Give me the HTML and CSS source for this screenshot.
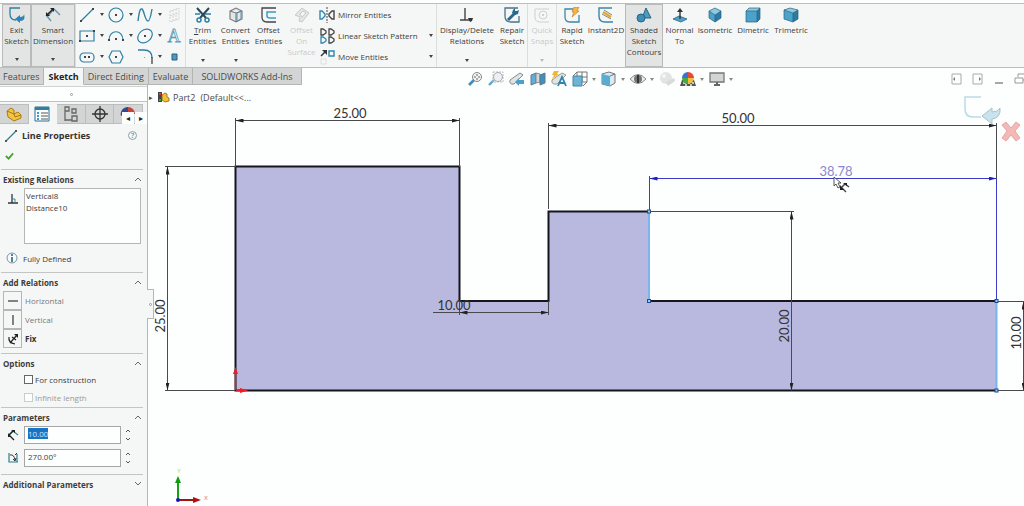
FILE: index.html
```
<!DOCTYPE html>
<html lang="en">
<head>
    <meta charset="UTF-8">
    <meta name="viewport" content="width=device-width, initial-scale=1.0">
    <title>Part2 - Sketch</title>
    <link rel="stylesheet" href="styles.css">
</head>
<body>
    <header class="ribbon">
        <div class="group">
            <button type="button" class="tool pressed w-exit">
                <svg class="icon" viewBox="0 0 16 16"><path d="M11 1H1v6q0 6 6 6" fill="none" stroke="#2f7fa3" stroke-width="1.3"/><path d="M6 12l5-4v2q4 0 4-3 2 7-4 7v2z" fill="#2f86b4"/></svg>
                <span>Exit<br>Sketch</span><i class="caret"></i>
            </button>
            <button type="button" class="tool pressed w-smart">
                <svg class="icon" viewBox="0 0 16 16"><path d="M3 9l6-7 6 6M1 8l5 6" fill="none" stroke="#5b93ab" stroke-width="1.3"/><path d="M2 8l6-6" stroke="#222" stroke-width="1.5"/><path d="M5 1h4v4zM1 5v4h4z" fill="#222"/></svg>
                <span>Smart<br>Dimension</span><i class="caret"></i>
            </button>
        </div>

        <div class="group sketch-tools">
            <button type="button" aria-label="Line"><svg class="icon" viewBox="0 0 16 16"><path d="M2 14L14 2" stroke="#2f7fa3" stroke-width="1.3"/><path d="M1 13h2v2H1zM13 1h2v2h-2z" fill="#444"/></svg><i class="caret"></i></button>
            <button type="button" aria-label="Circle"><svg class="icon" viewBox="0 0 16 16"><circle cx="8" cy="8" r="7" fill="none" stroke="#2f7fa3" stroke-width="1.2"/><path d="M7 7h2v2H7z" fill="#444"/></svg><i class="caret"></i></button>
            <button type="button" aria-label="Spline"><svg class="icon" viewBox="0 0 16 16"><path d="M1 14C2 6 3 1 5 2s3 12 6 12c2 0 3-6 4-12" fill="none" stroke="#2f7fa3" stroke-width="1.4"/></svg><i class="caret"></i></button>
            <button type="button" aria-label="Plane" disabled><svg class="icon" viewBox="0 0 16 16"><path d="M4 4l9-3v11l-9 3zM7 3v11M10 2v11M4 9l9-3" fill="none" stroke="#d2d4d4" stroke-dasharray="2 1"/></svg></button>
            <button type="button" aria-label="Rectangle"><svg class="icon" viewBox="0 0 16 16"><path d="M1 3h14v10H1z" fill="none" stroke="#2f7fa3" stroke-width="1.2"/><path d="M7 7h2v2H7zM0 12h2v2H0zM14 2h2v2h-2z" fill="#444"/></svg><i class="caret"></i></button>
            <button type="button" aria-label="Arc"><svg class="icon" viewBox="0 0 16 16"><path d="M1 12C1 1 15 1 15 12" fill="none" stroke="#2f7fa3" stroke-width="1.2"/><path d="M7 10h2v2H7zM0 11h2v2H0zM14 11h2v2h-2z" fill="#444"/></svg><i class="caret"></i></button>
            <button type="button" aria-label="Ellipse"><svg class="icon" viewBox="0 0 16 16"><ellipse cx="8" cy="8" rx="8" ry="6" transform="rotate(-40 8 8)" fill="none" stroke="#2f7fa3" stroke-width="1.2"/><path d="M7 7h2v2H7z" fill="#444"/></svg><i class="caret"></i></button>
            <button type="button" aria-label="Text"><svg class="icon-text" viewBox="0 0 16 20"><text x="8" y="16" text-anchor="middle" class="glyph-a">A</text></svg></button>
            <button type="button" aria-label="Slot"><svg class="icon" viewBox="0 0 16 16"><rect x="1" y="4" width="14" height="9" rx="4" fill="none" stroke="#2f7fa3" stroke-width="1.2"/><path d="M5 7h2v2H5zM9 7h2v2H9z" fill="#444"/></svg><i class="caret"></i></button>
            <button type="button" aria-label="Polygon"><svg class="icon" viewBox="0 0 16 16"><path d="M4 2h8l3 6-3 6H4L1 8z" fill="none" stroke="#2f7fa3" stroke-width="1.2"/><path d="M7 7h2v2H7z" fill="#444"/></svg></button>
            <button type="button" aria-label="Fillet"><svg class="icon" viewBox="0 0 16 16"><path d="M1 1h6q8 0 8 8" fill="none" stroke="#2f7fa3" stroke-width="1.3"/><path d="M15 8v7" stroke="#444" stroke-width="1.3"/><path d="M7 8h1v1H7z" fill="#999"/></svg><i class="caret"></i></button>
            <button type="button" aria-label="Point"><svg class="icon" viewBox="0 0 16 16"><path d="M6 5h5v6H6z" fill="#4a9cc4" stroke="#2a5f7b"/></svg></button>
        </div>

        <div class="group">
            <button type="button" class="tool w-33">
                <svg class="icon" viewBox="0 0 16 16"><path d="M0 7h5M9 7h7" stroke="#2f7fa3" stroke-width="1.5"/><path d="M2 1l9 10M14 1L5 11" stroke="#28495a" stroke-width="2"/><circle cx="4" cy="13" r="2" fill="none" stroke="#2f7fa3" stroke-width="1.5"/><circle cx="12" cy="13" r="2" fill="none" stroke="#2f7fa3" stroke-width="1.5"/></svg>
                <span><u>T</u>rim<br>Entities</span><i class="caret"></i>
            </button>
            <button type="button" class="tool w-33">
                <svg class="icon" viewBox="0 0 16 16"><path d="M2 4l6-3 6 3v8l-6 3-6-3zM2 4l6 2 6-2M8 6v9" fill="#e5e7e7" stroke="#777" stroke-width="1.1"/><path d="M9 6l4-2v8l-4 2z" fill="none" stroke="#5793ad" stroke-width="1"/></svg>
                <span>Convert<br>Entities</span><i class="caret"></i>
            </button>
            <button type="button" class="tool w-33">
                <svg class="icon" viewBox="0 0 16 16"><path d="M15 1H1v9q0 5 5 5h9" fill="none" stroke="#444" stroke-width="1.3"/><path d="M15 5H6v4q0 2 3 2h6" fill="none" stroke="#3a9cc9" stroke-width="1.5"/></svg>
                <span>Offset<br>Entities</span>
            </button>
            <button type="button" class="tool w-33" disabled>
                <svg class="icon" viewBox="0 0 16 16"><path d="M1 8l7-7 7 5-7 9-3-1 1-4z" fill="#e3e5e5" stroke="#c8caca"/><path d="M6 7l3-3 3 2-4 4z" fill="#f5f6f6" stroke="#c8caca"/></svg>
                <span>Offset<br>On<br>Surface</span>
            </button>
        </div>

        <div class="group entity-list">
            <button type="button"><svg class="icon" viewBox="0 0 16 16"><path d="M8 0v16" stroke="#444" stroke-dasharray="2 1"/><path d="M1 4v8h2l3-3V7L3 4z" fill="none" stroke="#2f86b4" stroke-width="1.4"/><path d="M15 4v8h-2l-3-3V7l3-3z" fill="none" stroke="#444" stroke-width="1.4"/></svg><span>Mirror Entities</span></button>
            <button type="button"><svg class="icon" viewBox="0 0 16 16"><path d="M2 1v6h2l3-2V3L4 1zM10 1v6h2l3-2V3l-3-2zM10 9v6h2l3-2v-2l-3-2z" fill="none" stroke="#444" stroke-width="1.3"/><path d="M2 9v6h2l3-2v-2L4 9z" fill="none" stroke="#2f86b4" stroke-width="1.3"/></svg><span>Linear Sketch Pattern</span><i class="caret"></i></button>
            <button type="button"><svg class="icon" viewBox="0 0 16 16"><path d="M2 7l4-4" stroke="#333" stroke-width="1.5"/><path d="M3 1h5v5z" fill="#333"/><path d="M10 2h5v5h-5z" fill="none" stroke="#2f86b4" stroke-width="1.4"/><path d="M2 10h5v5H2z" fill="none" stroke="#ddd"/></svg><span>Move Entities</span><i class="caret"></i></button>
        </div>

        <div class="group">
            <button type="button" class="tool w-60">
                <svg class="icon" viewBox="0 0 16 16"><path d="M6 1v12M1 13h10" stroke="#444" stroke-width="1.4"/><path d="M9 11h5l-1 3-2 1z" fill="#333"/></svg>
                <span>Display/Delete<br>Relations</span><i class="caret"></i>
            </button>
            <button type="button" class="tool w-30">
                <svg class="icon" viewBox="0 0 16 16"><path d="M14 1H1v8q0 6 6 6h8V9" fill="none" stroke="#4b7488" stroke-width="1.3"/><path d="M4 13l7-7" stroke="#276b93" stroke-width="3"/><path d="M9 3l2-2v3h2l2-1-1 4-3 1-3-2z" fill="#276b93"/></svg>
                <span>Repair<br>Sketch</span>
            </button>
        </div>
        <div class="group">
            <button type="button" class="tool w-28" disabled>
                <svg class="icon" viewBox="0 0 16 16"><path d="M15 2H1v8q0 5 5 5h9" fill="none" stroke="#cfd1d1"/><circle cx="9" cy="8" r="4" fill="none" stroke="#cfd1d1"/><path d="M8 7h2v2H8z" fill="#cfd1d1"/></svg>
                <span>Quick<br>Snaps</span><i class="caret"></i>
            </button>
        </div>
        <div class="group last">
            <button type="button" class="tool w-30">
                <svg class="icon" viewBox="0 0 16 16"><path d="M9 2H1v8q0 5 5 5h9V8" fill="none" stroke="#3c87a8" stroke-width="1.3"/><path d="M10 0h5l-2 4h2l-7 6 2-5H8z" fill="#f6b73c" stroke="#b9772a" stroke-width=".6"/></svg>
                <span>Rapid<br>Sketch</span>
            </button>
            <button type="button" class="tool w-38">
                <svg class="icon" viewBox="0 0 16 16"><path d="M14 1H1v8q0 6 6 6h8" fill="none" stroke="#3c87a8" stroke-width="1.4"/><path d="M5 5l8 5" stroke="#e0a92f" stroke-width="2.4"/><path d="M4 7l9 5M6 3l8 5" stroke="#555" stroke-width=".7"/></svg>
                <span>Instant2D</span>
            </button>
            <button type="button" class="tool pressed w-38">
                <svg class="icon" viewBox="0 0 16 16"><path d="M10 1l5 10H6z" fill="#4a9cc4" stroke="#2a6380"/><circle cx="5" cy="11" r="4" fill="#3d8fb9" stroke="#2a6380"/></svg>
                <span>Shaded<br>Sketch<br>Contours</span>
            </button>
            <button type="button" class="tool w-33">
                <svg class="icon" viewBox="0 0 16 16"><path d="M1 12l6-3 8 3-6 3z" fill="#4ba3cc" stroke="#2a6380" stroke-width=".8"/><path d="M8 12V3" stroke="#333" stroke-width="1.4"/><path d="M5 5l3-4 3 4z" fill="#333"/></svg>
                <span>Normal<br>To</span>
            </button>
            <button type="button" class="tool w-38">
                <svg class="icon" viewBox="0 0 16 16"><path d="M8 1l6 3-6 4-6-4z" fill="#8ccbe4"/><path d="M2 4l6 4v7l-6-4z" fill="#4ba3cc"/><path d="M14 4L8 8v7l6-4z" fill="#2c7ba3"/><path d="M8 1l6 3v7l-6 4-6-4V4zM2 4l6 4 6-4M8 8v7" fill="none" stroke="#2a5f7b" stroke-width=".7"/></svg>
                <span>Isometric</span>
            </button>
            <button type="button" class="tool w-38">
                <svg class="icon" viewBox="0 0 16 16"><path d="M1 4l3-3h11l-3 3z" fill="#8ccbe4"/><path d="M1 4h11v11H1z" fill="#4ba3cc"/><path d="M15 1v11l-3 3V4z" fill="#2c7ba3"/><path d="M1 4l3-3h11v11l-3 3H1zM1 4h11v11M12 4l3-3" fill="none" stroke="#2a5f7b" stroke-width=".7"/></svg>
                <span>Dimetric</span>
            </button>
            <button type="button" class="tool w-38">
                <svg class="icon" viewBox="0 0 16 16"><path d="M1 3l6-2 8 2-5 3z" fill="#8ccbe4"/><path d="M1 3l9 3v9l-9-3z" fill="#4ba3cc"/><path d="M15 3v9l-5 3V6z" fill="#2c7ba3"/><path d="M1 3l6-2 8 2v9l-5 3-9-3zM1 3l9 3v9M10 6l5-3" fill="none" stroke="#2a5f7b" stroke-width=".7"/></svg>
                <span>Trimetric</span>
            </button>
        </div>
    </header>

    <nav class="tabs">
        <a href="#">Features</a>
        <a href="#" class="active">Sketch</a>
        <a href="#">Direct Editing</a>
        <a href="#">Evaluate</a>
        <a href="#" class="addins">SOLIDWORKS Add-Ins</a>
    </nav>

    <main class="workspace">
        <aside class="panel">
            <div class="grip"><i class="dot"></i></div>
            <div class="panel-tabs">
                <button type="button" aria-label="FeatureManager"><svg class="icon" viewBox="0 0 16 16"><path d="M1 5l4-3 3 2v4l4-2 3 3v3l-7 3-6-4z" fill="#f3c53c" stroke="#a9781b"/><path d="M8 8l1 3 6-2M1 5l7 3" fill="none" stroke="#a9781b"/></svg></button>
                <button type="button" aria-label="PropertyManager" class="active"><svg class="icon" viewBox="0 0 16 16"><path d="M1 1h14v14H1z" fill="#fff" stroke="#2a6f91"/><path d="M1 1h14v3H1z" fill="#2f7fa3"/><path d="M3 6h2v2H3zM3 9h2v2H3zM3 12h2v2H3z" fill="#3a9cc9"/><path d="M7 7h7M7 10h7M7 13h7" stroke="#555"/></svg></button>
                <button type="button" aria-label="ConfigurationManager"><svg class="icon" viewBox="0 0 16 16"><path d="M2 1h4v4H2zM9 3h4v4H9zM9 10h5v5H9zM2 5v9h7M2 5v10" fill="none" stroke="#666" stroke-width="1.3"/></svg></button>
                <button type="button" aria-label="DimXpertManager"><svg class="icon" viewBox="0 0 16 16"><circle cx="8" cy="8" r="5" fill="none" stroke="#333" stroke-width="1.3"/><path d="M8 0v16M0 8h16" stroke="#333" stroke-width="1.3"/></svg></button>
                <button type="button" aria-label="DisplayManager"><svg class="icon" viewBox="0 0 16 16"><path d="M8 8L1 10a7 7 0 0 1 7-9z" fill="#32498a"/><path d="M8 8V1a7 7 0 0 1 7 7z" fill="#c94336"/><path d="M8 8h7a7 7 0 0 1-14 2z" fill="#dfe7ef"/></svg></button>
                <div class="scroller"><button type="button" aria-label="Previous">◂</button><button type="button" aria-label="Next">▸</button></div>
            </div>
            <div class="title">
                <svg class="icon-sm" viewBox="0 0 12 12"><path d="M1 11L11 1" stroke="#3e7a88" stroke-width="1.2"/><path d="M0 10h2v2H0zM10 0h2v2h-2z" fill="#555"/></svg>
                <h1>Line Properties</h1>
                <button type="button" class="help" aria-label="Help">?</button>
            </div>
            <div class="confirm">
                <button type="button" aria-label="OK"><svg class="check" viewBox="0 0 10 8"><path d="M1 4l3 3 5-6" fill="none" stroke="#45a62c" stroke-width="2"/></svg></button>
            </div>

            <section>
                <h2>Existing Relations<svg class="chev" viewBox="0 0 6 4"><path d="M0 4l3-3 3 3"/></svg></h2>
                <div class="row">
                    <svg class="icon-sm row-icon" viewBox="0 0 12 12"><path d="M5 1v9M1 10h10" stroke="#333" stroke-width="1.3"/><path d="M5 6h3v4" fill="none" stroke="#3b8d95"/></svg>
                    <ul class="relations"><li>Vertical8</li><li>Distance10</li></ul>
                </div>
                <p class="status"><svg class="icon-sm" viewBox="0 0 12 12"><circle cx="6" cy="6" r="5" fill="#f5fafb" stroke="#81929b"/><path d="M6 2v2M6 5v5" stroke="#1a6c92" stroke-width="1.6"/></svg>Fully Defined</p>
            </section>

            <section>
                <h2>Add Relations<svg class="chev" viewBox="0 0 6 4"><path d="M0 4l3-3 3 3"/></svg></h2>
                <div class="add-relations">
                    <button type="button"><span class="box"><svg class="icon-sm" viewBox="0 0 12 12"><path d="M1 6h10" stroke="#333" stroke-width="1.2"/></svg></span>Horizontal</button>
                    <button type="button"><span class="box"><svg class="icon-sm" viewBox="0 0 12 12"><path d="M6 1v10" stroke="#333" stroke-width="1.2"/></svg></span>Vertical</button>
                    <button type="button" class="strong"><span class="box"><svg class="icon-sm" viewBox="0 0 12 12"><path d="M2 4q-1 6 6 7M3 10l7-8M5 4l4 3" fill="none" stroke="#222" stroke-width="1.2"/><path d="M7 1h4v4z" fill="#222"/></svg></span>Fix</button>
                </div>
            </section>

            <section>
                <h2>Options<svg class="chev" viewBox="0 0 6 4"><path d="M0 4l3-3 3 3"/></svg></h2>
                <div class="options">
                    <label><input type="checkbox">For construction</label>
                    <label class="off"><input type="checkbox" disabled>Infinite length</label>
                </div>
            </section>

            <section>
                <h2>Parameters<svg class="chev" viewBox="0 0 6 4"><path d="M0 4l3-3 3 3"/></svg></h2>
                <div class="params">
                    <label class="param" for="length">
                        <svg class="icon-sm" viewBox="0 0 12 12"><path d="M2 6l4-4 5 4" fill="none" stroke="#3f8f86" stroke-width="1.3"/><path d="M2 6l5 5M2 6l4-4" stroke="#222" stroke-width="1.4"/><path d="M1 4v4h3zM4 1h4v3z" fill="#222"/></svg>
                        <input type="text" id="length" value="10.00" aria-label="Length">
                        <span class="spin"><svg viewBox="0 0 5 3"><path d="M0 3l2-2 2 2"/></svg><svg viewBox="0 0 5 3"><path d="M0 0l2 2 2-2"/></svg></span>
                    </label>
                    <label class="param" for="angle">
                        <svg class="icon-sm" viewBox="0 0 12 12"><path d="M2 1v9h9M10 2v8" fill="none" stroke="#2c7f8c" stroke-width="1.2"/><path d="M3 3q4-1 5 5M6 7l2 2 1-3M8 3l2-2" fill="none" stroke="#333"/></svg>
                        <input type="text" id="angle" value="270.00°" aria-label="Angle">
                        <span class="spin"><svg viewBox="0 0 5 3"><path d="M0 3l2-2 2 2"/></svg><svg viewBox="0 0 5 3"><path d="M0 0l2 2 2-2"/></svg></span>
                    </label>
                </div>
            </section>

            <section>
                <h2>Additional Parameters<svg class="chev" viewBox="0 0 6 4"><path d="M0 0l3 3 3-3"/></svg></h2>
            </section>
            <div class="splitter"><i class="dot"></i></div>
        </aside>

        <div class="canvas">
            <svg class="drawing" width="100%" height="100%">
                <defs>
                    <marker id="arrow" viewBox="0 0 8 4" refX="8" refY="2" markerWidth="8" markerHeight="4" markerUnits="userSpaceOnUse" orient="auto-start-reverse"><path d="M0 0l8 2-8 2z" fill="#222"/></marker>
                    <marker id="arrowBlue" viewBox="0 0 8 4" refX="8" refY="2" markerWidth="8" markerHeight="4" markerUnits="userSpaceOnUse" orient="auto-start-reverse"><path d="M0 0l8 2-8 2z" fill="#2222b8"/></marker>
                </defs>

                <!-- profile -->
                <path class="face" d="M87.500 305.500V81.500H311.500V216H400.500V126.500H501V216H848.500V305.500z"/>
                <path class="edge" d="M848.500 305.500H87.500V81.500H311.500V216H400.500V126.500H501M501 216H848.500"/>
                <path class="edge selected" d="M501 126.500V216M848.500 216V305.500"/>

                <!-- extension lines -->
                <path class="ext" d="M87.500 33V82M311.500 33V82M400.500 38V124M848.500 38V94M17 81.500H87M17 305.500H87M501 126.500H646M311.500 216V230M400.500 216V230M848 216.500H876M848 305.500H876"/>
                <path class="ext blue" d="M501.500 91V126M848.500 94V216"/>

                <!-- dimensions -->
                <path class="dim" d="M87.500 35.500H311.500"/>
                <path class="dim" d="M400.500 40.500H848.500"/>
                <path class="dim" d="M19.500 81.500V305.500"/>
                <path class="dim" d="M643.500 126.500V305.500"/>
                <path class="dim" d="M311.500 227.500H400.500"/>
                <path class="ext" d="M285 227.500H312"/>
                <path class="dim" d="M875.500 216.500V305.500"/>
                <path class="dim blue" d="M501.500 93.500H848.500"/>

                <text x="202" y="33">25.00</text>
                <text x="590" y="38">50.00</text>
                <text x="688" y="91" class="picked">38.78</text>
                <text x="306" y="225">10.00</text>
                <text transform="translate(17 231) rotate(-90)">25.00</text>
                <text transform="translate(641 241) rotate(-90)">20.00</text>
                <text transform="translate(873 248) rotate(-90)">10.00</text>

                <g class="handles">
                    <rect x="499.500" y="125" width="3" height="3"/><rect x="499.500" y="214.500" width="3" height="3"/>
                    <rect x="847" y="214.500" width="3" height="3"/><rect x="847" y="304" width="3" height="3"/>
                </g>

                <!-- sketch origin -->
                <path d="M87.500 305V288M88 305.500H94" stroke="#d8232a" stroke-width="1.3"/>
                <path d="M85 289l2.500-7 2.500 7zM92 303l8 2.500-8 2.500z" fill="#ee1c25"/>

                <!-- cursor -->
                <path d="M686 92v9l2-2 2 4 2-1-2-4h3z" fill="#fff" stroke="#444" stroke-width=".9"/>
                <path d="M693 103l4-4 4 3M694 103l4 4" fill="none" stroke="#444" stroke-width="1.400"/><path d="M692 100v5h4zM695 98h4v3z" fill="#222"/>
            </svg>

            <div class="tree">
                <span class="expand">▸</span>
                <svg class="icon-sm" viewBox="0 0 12 12"><path d="M0 1h4v10H0z" fill="#444"/><path d="M1 2h2v2H1z" fill="#e33"/><path d="M1 8h2v2H1z" fill="#3a3"/><path d="M4 4l3-2 2 1v3l2 1v3l-4 1-3-2z" fill="#f0c236" stroke="#8a661b" stroke-width=".8"/></svg>
                <span>Part2</span><span class="config">(Default&lt;&lt;...</span>
            </div>

            <div class="view-bar">
                <button type="button" aria-label="Zoom to fit"><svg class="icon" viewBox="0 0 16 16"><path d="M2 14l5-5" stroke="#3d8fc0" stroke-width="2.600"/><circle cx="10" cy="6" r="4.500" fill="#f1f3f3" stroke="#888"/><path d="M10 3v6M7 6h6" stroke="#666" stroke-dasharray="2 2"/></svg></button>
                <button type="button" aria-label="Zoom to area"><svg class="icon" viewBox="0 0 16 16"><path d="M1 14l5-5" stroke="#5aa5cf" stroke-width="2.400"/><path d="M5 1h10v10H5z" fill="none" stroke="#bbb" stroke-dasharray="2 1"/><circle cx="10" cy="6" r="4.500" fill="#eaf0f3" stroke="#aaa"/></svg></button>
                <button type="button" aria-label="Previous view"><svg class="icon" viewBox="0 0 16 16"><path d="M1 9l10-7 3 2-9 9q-5 1-4-4z" fill="#e2e4e4" stroke="#8a8a8a"/><path d="M6 11l4-4v2h5v4h-5v2z" fill="#4a9fcb"/></svg></button>
                <button type="button" aria-label="Section view"><svg class="icon" viewBox="0 0 16 16"><path d="M1 4l5-2v10l-5 2z" fill="#5fb0d6" stroke="#678"/><path d="M6 2l4 1v8l-4 1z" fill="#d5d8d8" stroke="#888"/><path d="M10 4l5-2v10l-5 2z" fill="#3b91bf" stroke="#678"/></svg></button>
                <button type="button" aria-label="Dynamic annotation"><svg class="icon" viewBox="0 0 16 16"><path d="M1 9l10-7 4 2-9 9q-6 1-5-4z" fill="#e2e4e4" stroke="#999"/><path d="M3 0h5L6 3h2L1 8l2-4H1z" fill="#f2b632"/><path d="M7 15l4-9 4 9M9 12h5" fill="none" stroke="#2e84b0" stroke-width="1.800"/></svg></button>
                <button type="button" class="drop" aria-label="View orientation"><svg class="icon" viewBox="0 0 16 16"><path d="M5 1h10v10H5zM10 1v10M5 6h10M1 5l4-4M11 15l4-4" fill="none" stroke="#777"/><path d="M1 5h9v10H1z" fill="#6db4d6" stroke="#4586a5"/></svg><i class="caret"></i></button>
                <button type="button" class="drop" aria-label="Display style"><svg class="icon" viewBox="0 0 16 16"><path d="M1 3l7-2 6 2v9l-5 3-8-2z" fill="#d8ebf3" stroke="#777"/><path d="M1 3l8 2v10l-8-2z" fill="#5bacd3"/><path d="M9 5l5-2" stroke="#777"/></svg><i class="caret"></i></button>
                <button type="button" class="drop" aria-label="Hide/show items"><svg class="icon" viewBox="0 0 16 16"><path d="M0 8q8-9 16 0-8 9-16 0z" fill="#eee" stroke="#888"/><circle cx="8" cy="8" r="4" fill="#777"/><path d="M8 4v8" stroke="#222" stroke-width="1.500"/></svg><i class="caret"></i></button>
                <button type="button" aria-label="Edit appearance" disabled><svg class="icon" viewBox="0 0 16 16"><circle cx="7" cy="7" r="6" fill="#e2e4e4"/><path d="M9 15l-2-4 8-4 1 3z" fill="#d8dada"/><circle cx="5" cy="5" r="2" fill="#f5f5f5"/></svg></button>
                <button type="button" class="drop" aria-label="Apply scene"><svg class="icon" viewBox="0 0 16 16"><path d="M0 15l2-6h12l2 6z" fill="#555"/><path d="M3 12h3M8 12h2M12 12h2M5 14h2M10 14h2" stroke="#eee" stroke-width="1.500"/><path d="M8 7V1a6 6 0 0 0-6 6z" fill="#3b6fd1"/><path d="M8 7V1a6 6 0 0 1 6 6z" fill="#e14b3b"/><path d="M8 7H2a6 6 0 0 0 6 6z" fill="#48a846"/><path d="M8 7h6a6 6 0 0 1-6 6z" fill="#efc03a"/></svg><i class="caret"></i></button>
                <button type="button" class="drop" aria-label="View settings"><svg class="icon" viewBox="0 0 16 16"><path d="M1 2h14v9H1z" fill="#d3d5d5" stroke="#777" stroke-width="1.300"/><path d="M8 11v3M5 14h6" stroke="#666" stroke-width="2"/></svg><i class="caret"></i></button>
                <div class="window-controls">
                    <button type="button" aria-label="Left pane"><svg viewBox="0 0 12 12"><path d="M1 1h9v10H1z" fill="none" stroke="#aaa"/><path d="M4 4v4L2 6z" fill="#777"/></svg></button>
                    <button type="button" aria-label="Right pane"><svg viewBox="0 0 12 12"><path d="M1 1h9v10H1z" fill="none" stroke="#aaa"/><path d="M7 4v4l2-2z" fill="#777"/></svg></button>
                    <button type="button" aria-label="Minimize"><svg viewBox="0 0 12 12"><path d="M2 10h8" stroke="#777" stroke-width="1.300"/></svg></button>
                    <button type="button" aria-label="Restore"><svg viewBox="0 0 12 12"><path d="M4 4V1h8v6H9M1 5h8v5H1z" fill="none" stroke="#999"/></svg></button>
                </div>
            </div>

            <svg class="confirm-corner" viewBox="0 0 60 48">
                <path d="M17 1H1v12q0 8 8 8h8" fill="none" stroke="#bcd9e6" stroke-width="1.500"/>
                <path d="M18 20l10-8v4q6 0 8-4 1 10-8 11v5z" fill="#c9e2ec" stroke="#a9c2cc"/>
                <path d="M38 29l4-3 5 6 5-6 4 3-5 6 5 7-4 3-5-6-5 6-4-3 5-7z" fill="#f2b9b6" stroke="#e5a8a5"/>
            </svg>

            <svg class="triad" viewBox="0 0 40 40">
                <path d="M6 32V14" stroke="#13a313" stroke-width="2"/><path d="M3 16l3-7 3 7z" fill="#0c9c0c"/>
                <path d="M6 33h16" stroke="#a01616" stroke-width="2"/><path d="M21 30l8 3-8 3z" fill="#b01010"/>
                <circle cx="6" cy="33" r="2" fill="#1717b5"/>
                <text x="7" y="6" fill="#7de07d">Y</text><text x="34" y="33" fill="#d66">X</text>
            </svg>
        </div>
    </main>

    <script>
        const lengthInput = document.getElementById('length');
        lengthInput.focus();
        lengthInput.select();
    </script>
</body>
</html>
```
FILE: styles.css
```
* {
    box-sizing: border-box;
}
body {
    font-family: 'Open Sans', 'Noto Sans', sans-serif;
    font-size: 8px;
    line-height: 11px;
    color: #3c3c3c;
    background-color: #fdfefe;
    margin: 0;
    min-height: 100vh;
    display: flex;
    flex-direction: column;
    overflow: hidden;
}
button {
    font: inherit;
    color: inherit;
    background: none;
    border: none;
    padding: 0;
    margin: 0;
}
button:disabled {
    color: #c8caca;
}
svg {
    display: block;
    flex: none;
}
.icon {
    width: 16px;
    height: 16px;
}
.icon-sm {
    width: 12px;
    height: 12px;
}
.icon-text {
    width: 16px;
    height: 20px;
}
.caret {
    border: 2px solid transparent;
    border-top: 3px solid #444;
    border-bottom: none;
    flex: none;
}

/* ribbon */
.ribbon {
    display: flex;
    height: 65px;
    margin-top: 3px;
    padding-left: 2px;
    background: #f5f7f6;
    border-top: 1px solid #bcbebd;
    border-bottom: 1px solid #bcbebd;
}
.group {
    display: flex;
    flex: none;
    border-right: 1px solid #dcdedd;
}
.group.last {
    border-right: none;
}
.tool {
    position: relative;
    display: flex;
    flex-direction: column;
    align-items: center;
    padding-top: 3px;
    text-align: center;
    white-space: nowrap;
}
.tool span {
    margin-top: 1px;
}
.tool .caret {
    position: absolute;
    bottom: 5px;
}
.tool:disabled .caret {
    border-top-color: #bbb;
}
.pressed {
    background: #e3e5e4;
    border: 1px solid #b9bbba;
    padding-top: 2px;
}
.w-28 { width: 28px; }
.w-exit { width: 29px; }
.w-30 { width: 30px; }
.w-33 { width: 33px; }
.w-38 { width: 38px; }
.w-smart { width: 44px; }
.w-60 { width: 60px; }
.sketch-tools {
    display: grid;
    grid-template-columns: 29px 29px 29px 19px;
    grid-auto-rows: 21px;
    padding-left: 3px;
}
.sketch-tools button {
    display: flex;
    align-items: center;
    gap: 5px;
}
.group:has(.w-33) {
    border-right-color: transparent;
}
.glyph-a {
    font: 18px 'Liberation Serif', serif;
    fill: #f5f7f6;
    stroke: #5a9ab6;
    stroke-width: .8px;
}
.entity-list {
    flex-direction: column;
    width: 118px;
}
.entity-list button {
    display: flex;
    align-items: center;
    gap: 3px;
    height: 21px;
}
.entity-list .caret {
    margin-left: auto;
    margin-right: 3px;
}

/* command tabs */
.tabs {
    display: flex;
    font-size: 9px;
    height: 17px;
}
.tabs a {
    padding: 2px 4px 0;
    line-height: 13px;
    color: #4a4a4a;
    text-decoration: none;
    background: #d3d5d4;
    border-right: 1px solid #b3b5b4;
    border-bottom: 1px solid #b3b5b4;
}
.tabs a:first-child {
    padding-left: 3px;
}
.tabs .addins {
    padding: 2px 8px 0;
}
.tabs .active {
    font-weight: bold;
    color: #222;
    background: #f5f7f6;
    border-bottom-color: #f5f7f6;
}

.workspace {
    display: flex;
    flex: 1;
}

/* property panel */
.panel {
    position: relative;
    width: 148px;
    flex: none;
    background: #f5f7f6;
    border-right: 1px solid #b5b7b6;
}
.grip {
    display: flex;
    align-items: center;
    justify-content: center;
    height: 16px;
    margin-top: 1px;
    padding-right: 4px;
    background: #fdfefe;
    border-top: 1px solid #d0d2d1;
    border-bottom: 1px solid #c0c2c1;
}
.dot {
    width: 3px;
    height: 3px;
    border: 1px solid #999;
    border-radius: 50%;
}
.panel-tabs {
    position: relative;
    display: grid;
    grid-template-columns: repeat(5, 1fr);
    height: 20px;
    margin: 2px 4px 0 0;
}
.panel-tabs > button {
    display: flex;
    align-items: center;
    justify-content: center;
    background: #d3d5d4;
    border: 1px solid #bcbebd;
    border-left: none;
}
.panel-tabs > .active {
    background: #f5f7f6;
    border-color: #f5f7f6;
}
.scroller {
    position: absolute;
    right: -4px;
    bottom: 0;
    display: flex;
    gap: 1px;
}
.scroller button {
    width: 12px;
    height: 12px;
    color: #222;
    background: #fdfefe;
    line-height: 10px;
}
.title {
    display: flex;
    align-items: center;
    gap: 5px;
    height: 23px;
    padding: 0 10px 0 5px;
}
h1 {
    flex: 1;
    margin: 0;
    font-size: 9px;
    color: #333;
}
.help {
    width: 9px;
    height: 9px;
    font-size: 7px;
    line-height: 7px;
    color: #28748a;
    border: 1px solid #8ba3aa;
    border-radius: 50%;
}
.confirm {
    height: 22px;
    padding: 4px 5px;
}
.check {
    width: 9px;
    height: 8px;
}
section {
    margin: 0 4px 0 1px;
    border-top: 1px solid #c3c5c4;
}
h2 {
    display: flex;
    align-items: center;
    justify-content: space-between;
    height: 18px;
    margin: 0;
    padding: 0 2px;
    font-size: 8px;
    color: #3c3c3c;
}
.chev {
    width: 6px;
    height: 4px;
    fill: none;
    stroke: #666;
}
.row {
    display: flex;
    gap: 5px;
    padding: 0 2px 0 6px;
}
.row-icon {
    margin-top: 5px;
}
.relations {
    flex: 1;
    height: 56px;
    margin: 0;
    padding: 1px;
    line-height: 12px;
    list-style: none;
    background: #fdfefe;
    border: 1px solid #b5b7b6;
}
.status {
    display: flex;
    align-items: center;
    gap: 5px;
    height: 28px;
    margin: 0;
    padding-left: 5px;
}
.add-relations {
    padding: 0 2px 5px;
}
.add-relations button {
    display: flex;
    align-items: center;
    gap: 3px;
    height: 19px;
    color: #777;
}
.add-relations .strong {
    color: #333;
    font-weight: bold;
}
.box {
    display: flex;
    align-items: center;
    justify-content: center;
    width: 19px;
    height: 19px;
    border: 1px solid #b5b7b6;
}
.options {
    display: grid;
    gap: 4px;
    padding: 0 0 3px 23px;
}
.options label {
    display: flex;
    align-items: center;
    gap: 2px;
    height: 14px;
}
.options .off {
    color: #999;
}
.options input {
    appearance: none;
    width: 9px;
    height: 9px;
    margin: 0;
    background: #fdfefe;
    border: 1px solid #666;
}
.options input:disabled {
    border-color: #ccc;
}
.params {
    display: grid;
    gap: 5px;
    padding: 0 2px 7px 6px;
}
.param {
    display: flex;
    align-items: center;
    gap: 5px;
}
.param input {
    width: 97px;
    height: 18px;
    padding: 0 3px 3px;
    font: inherit;
    color: #3c3c3c;
    background: #fdfefe;
    border: 1px solid #a5a7a6;
    border-radius: 0;
    outline: none;
}
.param input::selection {
    color: #cfe6f7;
    background: #1873c4;
}
.spin {
    display: grid;
    gap: 6px;
}
.spin svg {
    width: 5px;
    height: 3px;
    fill: none;
    stroke: #555;
}
.splitter {
    position: absolute;
    left: 147px;
    top: 204px;
    z-index: 1;
    display: flex;
    align-items: center;
    justify-content: center;
    width: 7px;
    height: 30px;
    background: #f5f7f6;
    border: 1px solid #b5b7b6;
    border-left: none;
}

/* graphics area */
.canvas {
    position: relative;
    flex: 1;
    min-width: 0;
}
.drawing {
    position: absolute;
    inset: 0;
}
.drawing text {
    font: 13px Lato, sans-serif;
    fill: #333;
    text-anchor: middle;
}
.drawing .picked {
    fill: #8c86cf;
}
.face {
    fill: #b9b9e0;
}
.edge {
    fill: none;
    stroke: #15151c;
    stroke-width: 2px;
}
.edge.selected {
    stroke: #79b4ee;
}
.ext, .dim {
    fill: none;
    stroke: #4a4a4e;
    stroke-width: 1px;
}
.dim {
    marker-start: url(#arrow);
    marker-end: url(#arrow);
}
.blue {
    stroke: #3b3bc4;
}
.dim.blue {
    marker-start: url(#arrowBlue);
    marker-end: url(#arrowBlue);
}
.handles {
    fill: #9cc8ee;
    stroke: #1d4f86;
}
.tree {
    position: absolute;
    left: 1px;
    top: 6px;
    display: flex;
    align-items: center;
    font-size: 9px;
    color: #4a4a4a;
}
.tree .expand {
    width: 9px;
    font-size: 7px;
}
.tree .icon-sm {
    margin-right: 3px;
}
.tree .config {
    margin-left: 5px;
}
.view-bar {
    position: absolute;
    left: 319px;
    right: 0;
    top: -14px;
    display: flex;
    align-items: center;
    gap: 5px;
    overflow: hidden;
}
.view-bar .drop {
    display: flex;
    align-items: center;
    gap: 4px;
}
.view-bar .caret {
    border-top-color: #888;
}
.window-controls {
    display: flex;
    gap: 9px;
    margin-left: auto;
    margin-right: -2px;
}
.window-controls svg {
    width: 12px;
    height: 12px;
}
.confirm-corner {
    position: absolute;
    right: 0;
    top: 11px;
    width: 60px;
    height: 48px;
}
.triad {
    position: absolute;
    left: 24px;
    bottom: -1px;
    width: 40px;
    height: 40px;
}
.triad text {
    font-size: 6px;
    text-anchor: middle;
}
```
